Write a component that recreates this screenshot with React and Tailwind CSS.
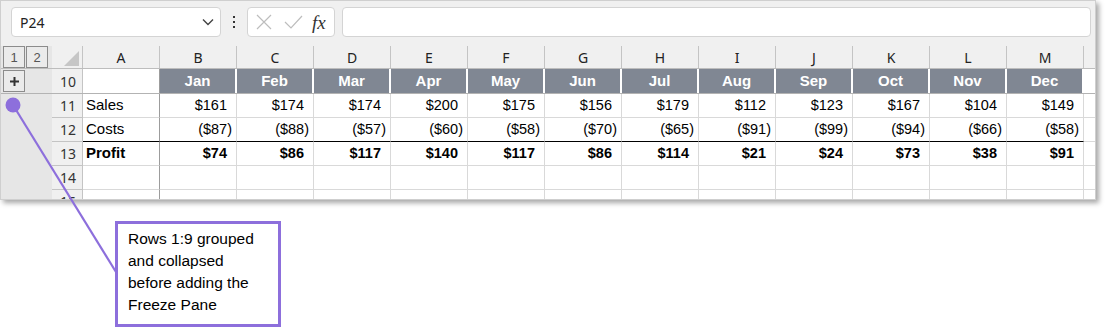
const MONTHS = [
    { col: 'B', name: 'Jan', sales: 161, costs: 87, profit: 74 },
    { col: 'C', name: 'Feb', sales: 174, costs: 88, profit: 86 },
    { col: 'D', name: 'Mar', sales: 174, costs: 57, profit: 117 },
    { col: 'E', name: 'Apr', sales: 200, costs: 60, profit: 140 },
    { col: 'F', name: 'May', sales: 175, costs: 58, profit: 117 },
    { col: 'G', name: 'Jun', sales: 156, costs: 70, profit: 86 },
    { col: 'H', name: 'Jul', sales: 179, costs: 65, profit: 114 },
    { col: 'I', name: 'Aug', sales: 112, costs: 91, profit: 21 },
    { col: 'J', name: 'Sep', sales: 123, costs: 99, profit: 24 },
    { col: 'K', name: 'Oct', sales: 167, costs: 94, profit: 73 },
    { col: 'L', name: 'Nov', sales: 104, costs: 66, profit: 38 },
    { col: 'M', name: 'Dec', sales: 149, costs: 58, profit: 91 },
]

const HDR_FONT = "font-['Noto_Sans',sans-serif]"

function OutlineButton({ children }) {
    return (
        <div className="flex h-[22px] w-[22px] items-center justify-center border border-[#8c8c8c] bg-[#ebebeb] text-[13px] leading-none text-[#555]">
            {children}
        </div>
    )
}

function RowHead({ n, children, bottom = 'border-[#d4d4d4]', height = 'h-[24px]' }) {
    return (
        <div className={`flex ${height} shrink-0 border-b ${bottom}`}>
            <div className="w-[51px] shrink-0 bg-[#e6e6e6]" />
            <div className={`flex w-[31px] shrink-0 items-center justify-end border-r border-[#c4c4c4] bg-[#f0f0f0] pr-[6px] text-[14px] text-[#333] ${HDR_FONT}`}>
                {n}
            </div>
            {children}
        </div>
    )
}

function DataRow({ n, label, bold, values, negative, blackBottom }) {
    const weight = bold ? 'font-bold' : ''
    const bottom = blackBottom ? 'border-b-black' : 'border-b-[#d9d9d9]'
    return (
        <div className="flex h-[24px] shrink-0">
            <div className="w-[51px] shrink-0 border-b border-[#e6e6e6] bg-[#e6e6e6]" />
            <div className={`flex w-[31px] shrink-0 items-center justify-end border-r border-b border-[#c4c4c4] bg-[#f0f0f0] pr-[6px] text-[14px] text-[#333] ${HDR_FONT}`}>
                {n}
            </div>
            <div className={`flex w-[77px] shrink-0 items-center border-r border-r-[#9c9c9c] border-b bg-white pl-[3px] text-[15px] text-black ${weight} ${bottom}`}>
                {label}
            </div>
            {values.map((v, i) => (
                <div
                    key={i}
                    className={`flex w-[77px] shrink-0 items-center justify-end border-r border-r-[#d9d9d9] border-b bg-white text-[14.5px] text-black ${weight} ${negative ? 'pr-[4px]' : 'pr-[9px]'} ${bottom}`}
                >
                    {v}
                </div>
            ))}
            <div className="flex-1 border-b border-[#d9d9d9] bg-white" />
        </div>
    )
}

function FormulaBar() {
    return (
        <div className="flex h-[45px] shrink-0 items-start pt-[6px] pl-[10px]">
            <div className="flex h-[30px] w-[210px] items-center justify-between rounded-[4px] border border-[#d4d4d4] bg-white pl-[8px] pr-[6px]">
                <span className="text-[14px] text-[#222] font-['Noto_Sans',sans-serif]">P24</span>
                <svg width="12" height="8" viewBox="0 0 12 8" fill="none">
                    <path d="M1 1.5l5 5 5-5" stroke="#444" strokeWidth="1.4" />
                </svg>
            </div>
            <div className="flex h-[30px] w-[26px] flex-col items-center justify-center gap-[3px]">
                <span className="h-[2px] w-[2px] bg-[#333]" />
                <span className="h-[2px] w-[2px] bg-[#333]" />
                <span className="h-[2px] w-[2px] bg-[#333]" />
            </div>
            <div className="flex h-[30px] w-[88px] items-center gap-[9px] rounded-[4px] border border-[#d4d4d4] bg-white pl-[6px]">
                <svg width="20" height="20" viewBox="0 0 20 20" fill="none">
                    <path d="M3 3l14 14M17 3L3 17" stroke="#bdbdbd" strokeWidth="1.2" />
                </svg>
                <svg width="20" height="20" viewBox="0 0 20 20" fill="none">
                    <path d="M2 10l6 6L19 4" stroke="#bdbdbd" strokeWidth="1.2" />
                </svg>
                <span className="text-[19px] italic leading-none text-[#333] font-['Liberation_Serif',serif]">fx</span>
            </div>
            <div className="ml-[7px] h-[30px] w-[749px] rounded-[4px] border border-[#d4d4d4] bg-white" />
        </div>
    )
}

export default function App() {
    return (
        <div className="relative h-[330px] w-[1107px] overflow-hidden bg-white font-['Liberation_Sans',Arial,sans-serif]">
            <div className="flex h-[200px] w-[1096px] flex-col overflow-hidden border border-[#cfcfcf] bg-[#f0f0f0] shadow-[3px_3px_5px_rgba(0,0,0,0.35)]">
                <FormulaBar />

                {/* column letters */}
                <div className="flex h-[23px] shrink-0 border-b border-[#bdbdbd] bg-[#f0f0f0]">
                    <div className="flex w-[51px] shrink-0 items-start gap-[1px] bg-[#e6e6e6] pl-[2px]">
                        <OutlineButton>1</OutlineButton>
                        <OutlineButton>2</OutlineButton>
                    </div>
                    <div className="flex w-[31px] shrink-0 items-end justify-end border-r border-[#c4c4c4] pr-[3px] pb-[2px]">
                        <svg width="15" height="15" viewBox="0 0 15 15">
                            <path d="M15 0V15H0Z" fill="#c6c6c6" />
                        </svg>
                    </div>
                    <div className={`flex w-[77px] shrink-0 items-center justify-center border-r border-[#c4c4c4] text-[14px] text-[#222] ${HDR_FONT}`}>A</div>
                    {MONTHS.map((m) => (
                        <div key={m.col} className={`flex w-[77px] shrink-0 items-center justify-center border-r border-[#c4c4c4] text-[14px] text-[#222] ${HDR_FONT}`}>
                            {m.col}
                        </div>
                    ))}
                    <div className="flex-1" />
                </div>

                {/* row 10: month headers */}
                <RowHead n="10" bottom="border-[#b3b3b3]" height="h-[25px]">
                    <div className="w-[77px] shrink-0 border-r border-[#9c9c9c] bg-white" />
                    {MONTHS.map((m) => (
                        <div key={m.col} className="flex w-[77px] shrink-0 items-center justify-center border-r-2 border-white bg-[#808793] text-[15px] font-bold text-white">
                            {m.name}
                        </div>
                    ))}
                    <div className="flex-1 bg-white" />
                </RowHead>

                <DataRow n="11" label="Sales" values={MONTHS.map((m) => `$${m.sales}`)} />
                <DataRow n="12" label="Costs" negative blackBottom values={MONTHS.map((m) => `($${m.costs})`)} />
                <DataRow n="13" label="Profit" bold values={MONTHS.map((m) => `$${m.profit}`)} />
                <DataRow n="14" label="" values={MONTHS.map(() => '')} />
                <DataRow n="15" label="" values={MONTHS.map(() => '')} />
            </div>

            <div className="ml-[115px] mt-[21px] h-[106px] w-[166px] border-[3px] border-[#8d6fdc] bg-white pt-[4px] pl-[10px] text-[15.5px] leading-[22px] text-black">
                Rows 1:9 grouped
                <br />
                and collapsed
                <br />
                before adding the
                <br />
                Freeze Pane
            </div>

            {/* pointer line */}
            <svg className="pointer-events-none absolute inset-0" width="1107" height="330">
                <line x1="13" y1="105" x2="116" y2="272" stroke="#8d6fdc" strokeWidth="2.2" />
                <circle cx="13" cy="105" r="7.5" fill="#8d6fdc" />
            </svg>

            <div className="absolute left-[3px] top-[70px] flex h-[22px] w-[22px] items-center justify-center border border-[#8c8c8c] bg-[#ebebeb]">
                <svg width="11" height="11" viewBox="0 0 11 11">
                    <path d="M5.5 1v9M1 5.5h9" stroke="#333" strokeWidth="2" />
                </svg>
            </div>
        </div>
    )
}
